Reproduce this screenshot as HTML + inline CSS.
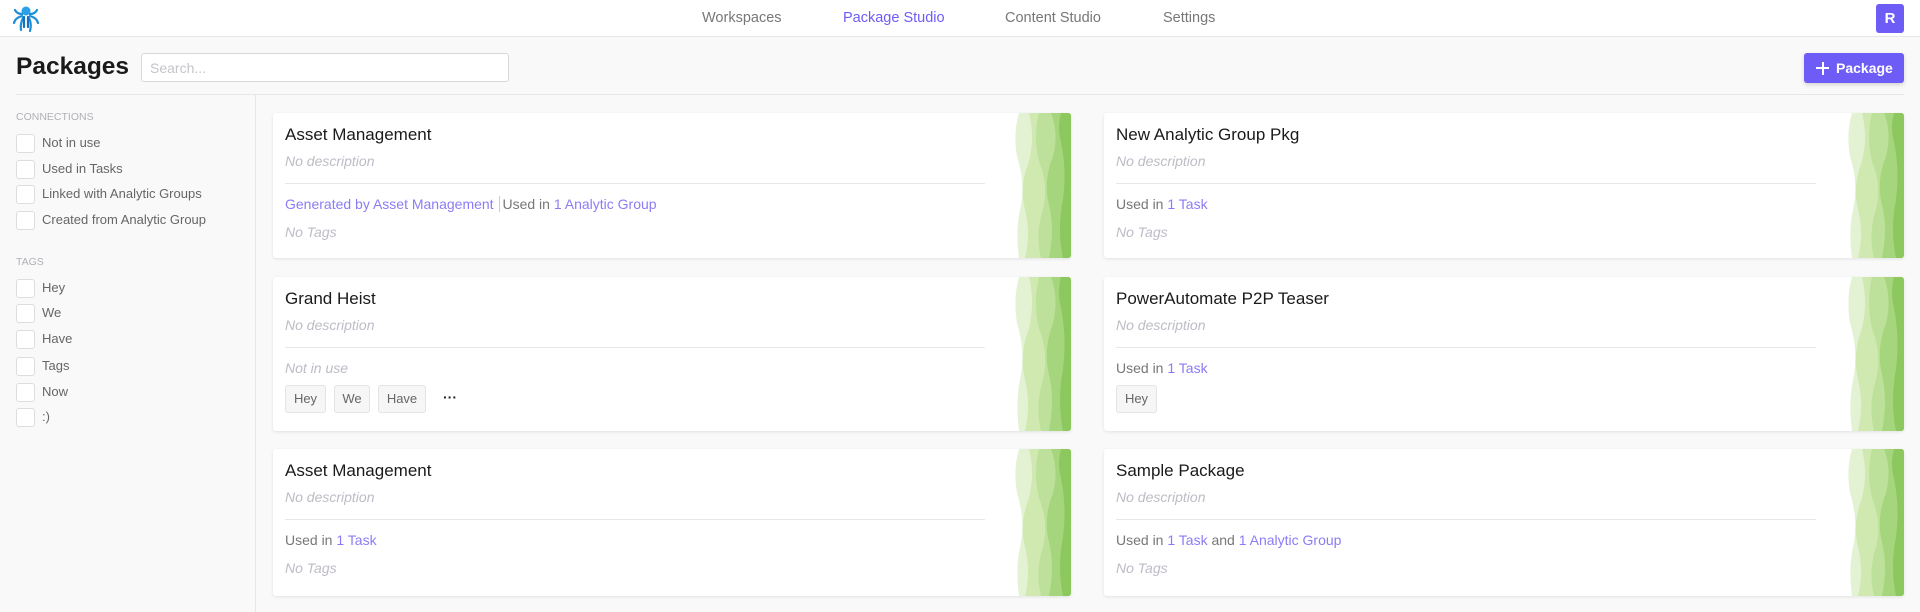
<!DOCTYPE html>
<html><head><meta charset="utf-8"><style>
*{box-sizing:border-box;margin:0;padding:0}
body{width:1920px;height:612px;overflow:hidden;background:#f9f9f9;font-family:"Liberation Sans",sans-serif;color:#222;position:relative}
.top{position:absolute;left:0;top:0;width:1920px;height:37px;background:#fff;border-bottom:1px solid #e6e6e6}
.nav{position:absolute;top:10px;font-size:14.5px;color:#777}
.av{position:absolute;left:1876px;top:4px;width:28px;height:29px;background:#6e5cf6;border-radius:3px;color:#fff;font-size:15px;font-weight:bold;text-align:center;line-height:29px}
h1{position:absolute;left:16px;top:53px;font-size:24.5px;font-weight:bold;color:#1a1a1a}
.search{position:absolute;left:141px;top:53px;width:368px;height:29px;background:#fff;border:1px solid #d8d8d8;border-radius:3px;font-size:14px;color:#c4c4cc;padding:6px 8px}
.btn{position:absolute;left:1804px;top:53px;width:100px;height:30px;background:#6e5cf6;border-radius:3px;color:#fff;font-size:14px;font-weight:bold;line-height:30px;padding-left:32px;box-shadow:0 2px 4px rgba(0,0,0,.15)}
.btn:before{content:"";position:absolute;left:12px;top:14px;width:13px;height:2px;background:#fff}
.btn:after{content:"";position:absolute;left:17.5px;top:8.5px;width:2px;height:13px;background:#fff}
.hr{position:absolute;left:16px;top:94px;width:1888px;height:1px;background:#e6e6e6}
.side{position:absolute;left:255px;top:95px;width:1px;height:517px;background:#e6e6e6}
.sec{position:absolute;left:16px;font-size:10.5px;color:#b0b0b8}
.cb{position:absolute;left:16px;font-size:13px;color:#666;line-height:17px;padding-left:26px}
.cb:before{content:"";position:absolute;left:0;top:0;width:17px;height:17px;border:1px solid #ddd;border-radius:3px;background:#fff}
.card{position:absolute;background:#fff;border-radius:3px;box-shadow:0 1px 3px rgba(0,0,0,.1);overflow:hidden}
.card .t{position:absolute;left:12px;top:12px;font-size:17px;color:#1a1a1a}
.card .d{position:absolute;left:12px;top:40px;font-size:14px;color:#bcbcc6;font-style:italic}
.card .ln{position:absolute;left:12px;top:70px;width:700px;height:1px;background:#e8e8e8}
.card .u{position:absolute;left:12px;top:83px;font-size:14px;color:#777}
.card .u a{color:#8b7cf6;text-decoration:none}
.card .nt{position:absolute;left:12px;top:111px;font-size:14px;color:#bcbcc6;font-style:italic}
.chip{position:absolute;top:108px;height:28px;background:#f6f6f6;border:1px solid #e4e4e4;border-radius:3px;font-size:13px;color:#666;text-align:center;line-height:26px}
.g{position:absolute;right:0;top:0;width:58px;height:100%}
</style></head><body>
<div class="top">
<svg style="position:absolute;left:12px;top:4px" width="28" height="30" viewBox="0 0 28 30"><g fill="none" stroke="#1a8fd8" stroke-width="2.2" stroke-linecap="round"><circle cx="14" cy="7" r="4.5" fill="#29a3e6" stroke="none"/><path d="M10 10 Q5 10 3 6M10 12 Q3 14 2 19M11 14 Q8 20 9 26M17 14 Q20 20 18 27M18 12 Q25 14 26 19M18 10 Q23 10 25 6"/><path d="M12 13 V23 M16 13 V23" stroke="#1570c0"/></g></svg>
<div class="nav" style="left:702px">Workspaces</div>
<div class="nav" style="left:843px;color:#6e5cf6">Package Studio</div>
<div class="nav" style="left:1005px">Content Studio</div>
<div class="nav" style="left:1163px">Settings</div>
<div class="av">R</div>
</div>
<h1>Packages</h1>
<div class="search">Search...</div>
<div class="btn">Package</div>
<div class="hr"></div>
<div class="side"></div>
<div class="sec" style="top:111px">CONNECTIONS</div>
<div class="cb" style="top:134px">Not in use</div>
<div class="cb" style="top:160px">Used in Tasks</div>
<div class="cb" style="top:185px">Linked with Analytic Groups</div>
<div class="cb" style="top:211px">Created from Analytic Group</div>
<div class="sec" style="top:256px">TAGS</div>
<div class="cb" style="top:279px">Hey</div>
<div class="cb" style="top:304px">We</div>
<div class="cb" style="top:330px">Have</div>
<div class="cb" style="top:357px">Tags</div>
<div class="cb" style="top:383px">Now</div>
<div class="cb" style="top:408px">:)</div>

<svg width="0" height="0" style="position:absolute"><defs><symbol id="gr" viewBox="0 0 58 150" preserveAspectRatio="none">
<path d="M6 0H58V150H6Q2 120 8 95Q12 70 4 45Q0 20 6 0Z" fill="#e4f2d4"/>
<path d="M16 0H58V150H12Q18 125 12 100Q6 75 16 50Q22 25 16 0Z" fill="#cfe9b1"/>
<path d="M26 0H58V150H28Q22 125 30 100Q36 75 26 50Q20 25 26 0Z" fill="#bde19a"/>
<path d="M38 0H58V150H36Q42 120 36 95Q30 70 40 45Q46 20 38 0Z" fill="#a5d57c"/>
<path d="M48 0H58V150H50Q44 120 50 90Q54 60 48 30Q44 15 48 0Z" fill="#8cc85d"/>
</symbol></defs></svg>

<div class="card" style="left:273px;top:113px;width:798px;height:145px"><div class="t">Asset Management</div><div class="d">No description</div><div class="ln"></div><div class="u"><a>Generated by Asset Management</a> <span style="border-left:1px solid #ccc;margin:0 2px"></span> Used in <a>1 Analytic Group</a></div><div class="nt">No Tags</div><svg class="g"><use href="#gr" width="58" height="100%"/></svg></div>
<div class="card" style="left:273px;top:277px;width:798px;height:154px"><div class="t">Grand Heist</div><div class="d">No description</div><div class="ln"></div><div class="u" style="color:#bcbcc6;font-style:italic">Not in use</div><div class="chip" style="left:12px;width:41px">Hey</div><div class="chip" style="left:61px;width:36px">We</div><div class="chip" style="left:105px;width:48px">Have</div><div style="position:absolute;left:170px;top:112px;font-size:14px;font-weight:bold">···</div><svg class="g"><use href="#gr" width="58" height="100%"/></svg></div>
<div class="card" style="left:273px;top:449px;width:798px;height:147px"><div class="t">Asset Management</div><div class="d">No description</div><div class="ln"></div><div class="u">Used in <a>1 Task</a></div><div class="nt">No Tags</div><svg class="g"><use href="#gr" width="58" height="100%"/></svg></div>

<div class="card" style="left:1104px;top:113px;width:800px;height:145px"><div class="t">New Analytic Group Pkg</div><div class="d">No description</div><div class="ln"></div><div class="u">Used in <a>1 Task</a></div><div class="nt">No Tags</div><svg class="g"><use href="#gr" width="58" height="100%"/></svg></div>
<div class="card" style="left:1104px;top:277px;width:800px;height:154px"><div class="t">PowerAutomate P2P Teaser</div><div class="d">No description</div><div class="ln"></div><div class="u">Used in <a>1 Task</a></div><div class="chip" style="left:12px;width:41px">Hey</div><svg class="g"><use href="#gr" width="58" height="100%"/></svg></div>
<div class="card" style="left:1104px;top:449px;width:800px;height:147px"><div class="t">Sample Package</div><div class="d">No description</div><div class="ln"></div><div class="u">Used in <a>1 Task</a> and <a>1 Analytic Group</a></div><div class="nt">No Tags</div><svg class="g"><use href="#gr" width="58" height="100%"/></svg></div>
</body></html>
